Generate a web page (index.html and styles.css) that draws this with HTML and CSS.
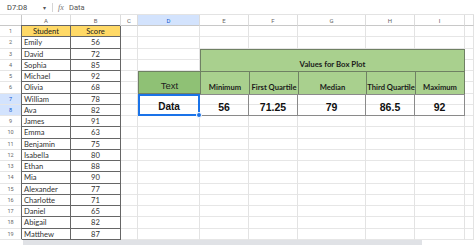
FILE: index.html
```html
<!DOCTYPE html>
<html lang="en">
<head>
    <meta charset="UTF-8">
    <title>Box Plot Data</title>
    <link rel="stylesheet" href="styles.css">
</head>
<body>
	<div class="formula-bar">
		<span class="name-box">D7:D8</span>
		<span class="name-arrow">▾</span>
		<span class="fx-sep"></span>
		<span class="fx">fx</span>
		<span class="formula">Data</span>
	</div>

	<div class="sheet">
		<!-- column headers -->
		<div class="corner"></div>
		<div class="col-head">A</div>
		<div class="col-head">B</div>
		<div class="col-head">C</div>
		<div class="col-head selected">D</div>
		<div class="col-head">E</div>
		<div class="col-head">F</div>
		<div class="col-head">G</div>
		<div class="col-head">H</div>
		<div class="col-head">I</div>
		<div class="col-head"></div>

		<!-- gridline columns -->
		<div class="col-line c2"></div>
		<div class="col-line c3"></div>
		<div class="col-line c4"></div>
		<div class="col-line c5"></div>
		<div class="col-line c6"></div>
		<div class="col-line c7"></div>
		<div class="col-line c8"></div>
		<div class="col-line c9"></div>
		<div class="col-line c10"></div>
		<div class="col-line c11"></div>

		<!-- row headers -->
		<div class="row-heads">
			<div class="row-head">1</div>
			<div class="row-head">2</div>
			<div class="row-head">3</div>
			<div class="row-head">4</div>
			<div class="row-head">5</div>
			<div class="row-head">6</div>
			<div class="row-head selected">7</div>
			<div class="row-head selected">8</div>
			<div class="row-head">9</div>
			<div class="row-head">10</div>
			<div class="row-head">11</div>
			<div class="row-head">12</div>
			<div class="row-head">13</div>
			<div class="row-head">14</div>
			<div class="row-head">15</div>
			<div class="row-head">16</div>
			<div class="row-head">17</div>
			<div class="row-head">18</div>
			<div class="row-head">19</div>
		</div>

		<!-- student scores -->
		<div class="scores">
			<div class="th">Student</div><div class="th">Score</div>
			<div class="name">Emily</div><div class="num">56</div>
			<div class="name">David</div><div class="num">72</div>
			<div class="name">Sophia</div><div class="num">85</div>
			<div class="name">Michael</div><div class="num">92</div>
			<div class="name">Olivia</div><div class="num">68</div>
			<div class="name">William</div><div class="num">78</div>
			<div class="name">Ava</div><div class="num">82</div>
			<div class="name">James</div><div class="num">91</div>
			<div class="name">Emma</div><div class="num">63</div>
			<div class="name">Benjamin</div><div class="num">75</div>
			<div class="name">Isabella</div><div class="num">80</div>
			<div class="name">Ethan</div><div class="num">88</div>
			<div class="name">Mia</div><div class="num">90</div>
			<div class="name">Alexander</div><div class="num">77</div>
			<div class="name">Charlotte</div><div class="num">71</div>
			<div class="name">Daniel</div><div class="num">65</div>
			<div class="name">Abigail</div><div class="num">82</div>
			<div class="name">Matthew</div><div class="num">87</div>
		</div>

		<!-- box plot values -->
		<div class="boxplot">
			<div class="bp-title">Values for Box Plot</div>
			<div class="bp-text">Text</div>
			<div class="bp-label">Minimum</div>
			<div class="bp-label">First Quartile</div>
			<div class="bp-label">Median</div>
			<div class="bp-label">Third Quartile</div>
			<div class="bp-label">Maximum</div>
			<div class="bp-data">Data<span class="handle"></span></div>
			<div class="bp-value">56</div>
			<div class="bp-value">71.25</div>
			<div class="bp-value">79</div>
			<div class="bp-value">86.5</div>
			<div class="bp-value">92</div>
		</div>
	</div>

	<div class="hscroll">
		<div class="hscroll-thumb"></div>
	</div>
</body>
</html>
```

FILE: styles.css
```css
body {
    margin: 0;
    width: 474px;
    height: 245px;
    overflow: hidden;
    background: #fff;
    font-family: Lato, "Liberation Sans", sans-serif;
    color: #333;
}

/* formula bar */
.formula-bar {
    display: flex;
    align-items: center;
    height: 14px;
    border-bottom: 1px solid #e3e3e3;
    font-family: Roboto, "Liberation Sans", sans-serif;
    font-size: 7.5px;
    color: #444;
}
.name-box {
    width: 36px;
    padding-left: 7px;
}
.name-arrow {
    font-size: 6px;
    color: #555;
    width: 9px;
}
.fx-sep {
    width: 1px;
    height: 9px;
    background: #d6d6d6;
    margin-right: 5px;
}
.fx {
    font-family: "Liberation Serif", serif;
    font-style: italic;
    font-size: 8px;
    color: #777;
    width: 11px;
}
.formula {
    color: #555;
}

/* sheet grid */
.sheet {
    display: grid;
    grid-template-columns: 22px 49px 50px 17px 62px 49px 49px 68px 49px 50px 9px;
    grid-template-rows: 11px repeat(19, 11.26px);
    height: 225px;
    background-image: repeating-linear-gradient(to bottom, transparent 0, transparent 10.26px, #e6e6e6 10.26px, #e6e6e6 11.26px);
    background-position: 0 11px;
    background-repeat: no-repeat;
    background-size: 100% 214px;
}
.corner,
.col-head {
    grid-row: 1;
    border-right: 1px solid #dcdcdc;
    border-bottom: 1px solid #c8c8c8;
    font-family: Roboto, "Liberation Sans", sans-serif;
    font-size: 6px;
    color: #666;
    display: flex;
    align-items: center;
    justify-content: center;
    background: #fff;
}
.corner {
    border-right: 1px solid #c8c8c8;
}
.col-head.selected {
    background: #d3e3fd;
    color: #0b57d0;
}

.col-line {
    grid-row: 2 / -1;
    border-right: 1px solid #e3e3e3;
}
.c2 { grid-column: 2; }
.c3 { grid-column: 3; }
.c4 { grid-column: 4; }
.c5 { grid-column: 5; }
.c6 { grid-column: 6; }
.c7 { grid-column: 7; }
.c8 { grid-column: 8; }
.c9 { grid-column: 9; }
.c10 { grid-column: 10; }
.c11 { grid-column: 11; }

.row-heads {
    grid-column: 1;
    grid-row: 2 / -1;
    display: grid;
    grid-template-rows: repeat(19, 1fr);
    border-right: 1px solid #c8c8c8;
    background: #fff;
}
.row-head {
    border-bottom: 1px solid #e6e6e6;
    font-family: Roboto, "Liberation Sans", sans-serif;
    font-size: 5.5px;
    color: #666;
    display: flex;
    align-items: center;
    justify-content: center;
}
.row-head.selected {
    background: #d3e3fd;
    color: #0b57d0;
}

/* student table */
.scores {
    grid-column: 2 / 4;
    grid-row: 2 / -1;
    display: grid;
    grid-template-columns: 49px 50px;
    grid-template-rows: repeat(19, 1fr);
    box-shadow: -1px -1px 0 #666;
    background: #fff;
    font-size: 7.6px;
}
.scores > div {
    border-right: 1px solid #666;
    border-bottom: 1px solid #666;
    display: flex;
    align-items: center;
}
.th {
    background: #ffd966;
    justify-content: center;
    color: #222;
}
.name {
    padding-left: 2px;
}
.num {
    justify-content: center;
}

/* box plot block */
.boxplot {
    grid-column: 5 / 11;
    grid-row: 4 / 10;
    display: grid;
    grid-template-columns: 62px 49px 49px 68px 49px 50px;
    grid-template-rows: repeat(3, 1fr);
    color: #1a1a1a;
}
.boxplot > div {
    display: flex;
    align-items: flex-end;
    justify-content: center;
    padding-bottom: 2px;
    box-sizing: border-box;
}
.bp-title {
    grid-column: 2 / 7;
    background: #a9d08e;
    border: 1px solid #6f8063;
    border-bottom: none;
    font-weight: bold;
    font-size: 7.8px;
}
.bp-text {
    grid-column: 1;
    background: #8fc175;
    border: 1px solid #6f8063;
    border-right: none;
    font-family: "Liberation Sans", sans-serif;
    font-size: 9.5px;
    color: #222;
}
.bp-label {
    background: #a9d08e;
    border-top: 1px solid #6f8063;
    border-left: 1px solid #6f8063;
    font-weight: bold;
    font-size: 7.6px;
}
.bp-label:nth-child(7) {
    border-right: 1px solid #6f8063;
}
.bp-data,
.bp-value {
    font-family: "Liberation Sans", sans-serif;
    font-weight: bold;
    color: #111;
    border-top: 1px solid #8a8a8a;
    border-bottom: 1px solid #8a8a8a;
    border-right: 1px solid #8a8a8a;
}
.bp-data {
    position: relative;
    font-size: 10px;
    border: 2px solid #1a73e8;
    padding-bottom: 1px;
}
.bp-value {
    font-size: 10.5px;
}
.handle {
    position: absolute;
    right: -4px;
    bottom: -4px;
    width: 4px;
    height: 4px;
    background: #1a73e8;
    border: 1px solid #fff;
    border-radius: 50%;
}

/* horizontal scrollbar */
.hscroll {
    height: 5px;
    padding-left: 23px;
    background: #fff;
}
.hscroll-thumb {
    width: 399px;
    height: 5px;
    background: #e0e2e6;
}
```
